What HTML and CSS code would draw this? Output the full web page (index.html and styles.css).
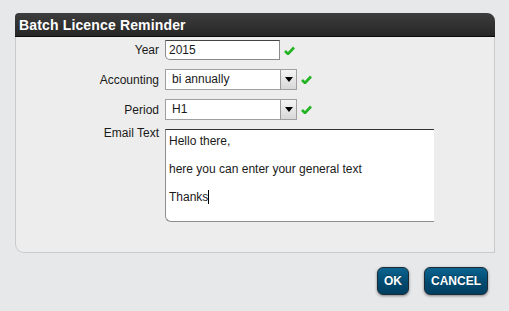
FILE: index.html
```html
<!DOCTYPE html>
<html>
<head>
<meta charset="utf-8">
<link rel="stylesheet" href="styles.css">
</head>
<body>
<div class="panel">
  <div class="panel-header">Batch Licence Reminder</div>
  <div class="panel-body">
    <div class="form">
      <label class="lbl">Year</label>
      <div class="ctrl">
        <div class="input year">2015</div>
        <svg class="check" width="11" height="9" viewBox="0 0 11 9"><path d="M1 5 L4 8 L10 1.5" fill="none" stroke="#22b422" stroke-width="2.6"/></svg>
      </div>
      <label class="lbl">Accounting</label>
      <div class="ctrl">
        <div class="select"><span class="sel-text">bi annually</span><span class="sel-btn"><span class="tri"></span></span></div>
        <svg class="check" width="11" height="9" viewBox="0 0 11 9"><path d="M1 5 L4 8 L10 1.5" fill="none" stroke="#22b422" stroke-width="2.6"/></svg>
      </div>
      <label class="lbl">Period</label>
      <div class="ctrl">
        <div class="select"><span class="sel-text">H1</span><span class="sel-btn"><span class="tri"></span></span></div>
        <svg class="check" width="11" height="9" viewBox="0 0 11 9"><path d="M1 5 L4 8 L10 1.5" fill="none" stroke="#22b422" stroke-width="2.6"/></svg>
      </div>
      <label class="lbl lbl-top">Email Text</label>
      <div class="ctrl">
        <div class="textarea">
          <p>Hello there,</p>
          <p>here you can enter your general text</p>
          <p>Thanks<span class="caret"></span></p>
        </div>
      </div>
    </div>
  </div>
</div>
<div class="actions">
  <button class="btn">OK</button>
  <button class="btn">CANCEL</button>
</div>
</body>
</html>
```
FILE: styles.css
```css
html, body {
  margin: 0;
  padding: 0;
}
body {
  background: #e7e8ea;
  font-family: "Liberation Sans", Arial, sans-serif;
  font-size: 12px;
  color: #1a1a1a;
  width: 509px;
  height: 311px;
  overflow: hidden;
}
.panel {
  margin: 13px 0 0 15px;
  width: 480px;
}
.panel-header {
  height: 23px;
  background: linear-gradient(#3d3d3d, #262626);
  border-bottom: 1px solid #0a0a0a;
  border-radius: 4px 8px 0 0;
  color: #fff;
  font-weight: bold;
  font-size: 14px;
  letter-spacing: 0.15px;
  line-height: 24px;
  padding-left: 4px;
}
.panel-body {
  height: 216px;
  box-sizing: border-box;
  background: #ededed;
  border: 1px solid #cacaca;
  border-top: none;
  border-radius: 0 0 0 9px;
  padding-top: 3px;
}
.form {
  display: grid;
  grid-template-columns: 143px auto;
  column-gap: 6px;
  row-gap: 9px;
  align-items: center;
}
.lbl {
  text-align: right;
}
.lbl-top {
  align-self: start;
  margin-top: -3px;
}
.ctrl {
  display: flex;
  align-items: center;
}
.input {
  width: 115px;
  height: 20px;
  box-sizing: border-box;
  background: #fff;
  border: 1px solid #8a8a8a;
  border-top-color: #444;
  border-radius: 0 0 0 5px;
  padding-left: 3px;
  line-height: 18px;
}
.check {
  margin-left: 4px;
}
.select {
  width: 132px;
  height: 21px;
  box-sizing: border-box;
  background: #fff;
  border: 1px solid #a0a0a0;
  display: flex;
}
.sel-text {
  flex: 1;
  padding-left: 6px;
  line-height: 19px;
}
.sel-btn {
  width: 15px;
  background: linear-gradient(#f4f4f4, #d8d8d8);
  border-left: 1px solid #9a9a9a;
  display: flex;
  align-items: center;
  justify-content: center;
}
.tri {
  width: 0;
  height: 0;
  border-left: 4px solid transparent;
  border-right: 4px solid transparent;
  border-top: 5px solid #000;
}
.textarea {
  width: 269px;
  height: 93px;
  box-sizing: border-box;
  background: #fff;
  border: 1px solid #8e8e8e;
  border-top-color: #333;
  border-right: none;
  border-radius: 0 0 0 6px;
  padding: 4px 0 0 3px;
}
.textarea p {
  margin: 0 0 13px 0;
  line-height: 15px;
}
.caret {
  display: inline-block;
  width: 1px;
  height: 14px;
  background: #000;
  vertical-align: -3px;
}
.actions {
  display: flex;
  justify-content: flex-end;
  gap: 15px;
  margin: 14px 21px 0 0;
}
.btn {
  height: 28px;
  padding: 0 6px;
  border: 1px solid #1d2b36;
  border-radius: 6px;
  background: linear-gradient(#0b6490, #004a70 55%, #003f60);
  color: #fff;
  font-family: "Liberation Sans", Arial, sans-serif;
  font-weight: bold;
  font-size: 12px;
  box-shadow: 0 1px 3px rgba(0,0,0,0.45);
  text-shadow: 0 -1px 0 rgba(0,0,0,0.3);
}
```
